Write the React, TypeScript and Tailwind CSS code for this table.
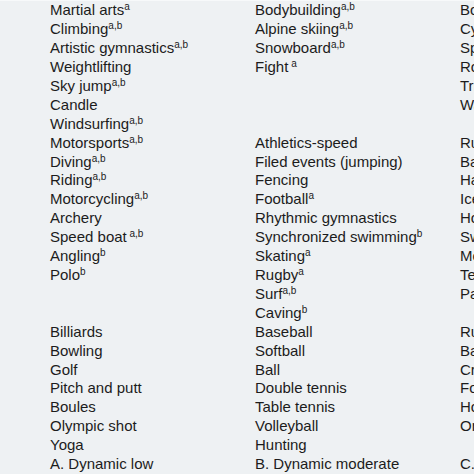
import React from "react";

type Cell = { t: string; s?: string; sp?: boolean } | null;

const col1: Cell[] = [
  { t: "Martial arts", s: "a" },
  { t: "Climbing", s: "a,b" },
  { t: "Artistic gymnastics", s: "a,b" },
  { t: "Weightlifting" },
  { t: "Sky jump", s: "a,b" },
  { t: "Candle" },
  { t: "Windsurfing", s: "a,b" },
  { t: "Motorsports", s: "a,b" },
  { t: "Diving", s: "a,b" },
  { t: "Riding", s: "a,b" },
  { t: "Motorcycling", s: "a,b" },
  { t: "Archery" },
  { t: "Speed boat", s: "a,b", sp: true },
  { t: "Angling", s: "b" },
  { t: "Polo", s: "b" },
  null,
  null,
  { t: "Billiards" },
  { t: "Bowling" },
  { t: "Golf" },
  { t: "Pitch and putt" },
  { t: "Boules" },
  { t: "Olympic shot" },
  { t: "Yoga" },
  { t: "A. Dynamic low" },
];

const col2: Cell[] = [
  { t: "Bodybuilding", s: "a,b" },
  { t: "Alpine skiing", s: "a,b" },
  { t: "Snowboard", s: "a,b" },
  { t: "Fight", s: "a", sp: true },
  null,
  null,
  null,
  { t: "Athletics-speed" },
  { t: "Filed events (jumping)" },
  { t: "Fencing" },
  { t: "Football", s: "a" },
  { t: "Rhythmic gymnastics" },
  { t: "Synchronized swimming", s: "b" },
  { t: "Skating", s: "a" },
  { t: "Rugby", s: "a" },
  { t: "Surf", s: "a,b" },
  { t: "Caving", s: "b" },
  { t: "Baseball" },
  { t: "Softball" },
  { t: "Ball" },
  { t: "Double tennis" },
  { t: "Table tennis" },
  { t: "Volleyball" },
  { t: "Hunting" },
  { t: "B. Dynamic moderate" },
];

const col3: Cell[] = [
  { t: "Boxing" },
  { t: "Cycling" },
  { t: "Speed skating" },
  { t: "Rowing" },
  { t: "Triathlon" },
  { t: "Water polo" },
  null,
  { t: "Running (long)" },
  { t: "Basketball" },
  { t: "Handball" },
  { t: "Ice hockey" },
  { t: "Hockey" },
  { t: "Swimming" },
  { t: "Mountain biking" },
  { t: "Tennis" },
  { t: "Paddle" },
  null,
  { t: "Running (middle)" },
  { t: "Badminton" },
  { t: "Cricket" },
  { t: "Football" },
  { t: "Hockey" },
  { t: "Orienteering" },
  null,
  { t: "C. Dynamic high" },
];

function Column({ items }: { items: Cell[] }) {
  return (
    <div className="flex flex-col">
      {items.map((c, i) => (
        <div key={i} className="h-[18.92px] leading-[18.92px] whitespace-nowrap">
          {c ? (
            <>
              {c.t}
              {c.s ? (
                <span className="relative top-[-5px] text-[10px] leading-none">
                  {c.sp ? "\u00a0" : ""}
                  {c.s}
                </span>
              ) : null}
            </>
          ) : (
            "\u00a0"
          )}
        </div>
      ))}
    </div>
  );
}

export default function App() {
  return (
    <div
      className="w-[474px] h-[474px] overflow-hidden bg-[#eef1f3] border-t border-[#f7f9fa] text-[#1c1c1c] text-[15px] pl-[50px] pt-[0.3px]"
      style={{ fontFamily: '"Liberation Sans", Arial, sans-serif' }}
    >
      <div className="grid grid-cols-[205px_205px_205px]">
        <Column items={col1} />
        <Column items={col2} />
        <Column items={col3} />
      </div>
    </div>
  );
}
